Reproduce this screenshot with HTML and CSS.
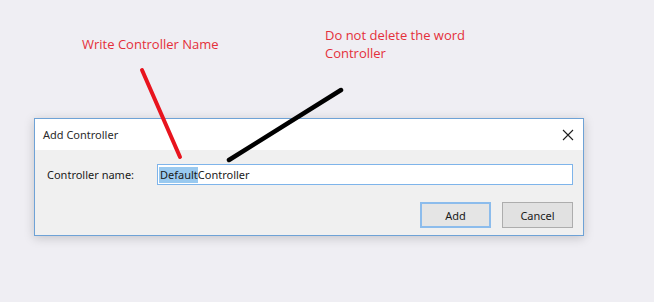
FILE: index.html
```html
<!DOCTYPE html>
<html>
<head>
<meta charset="utf-8">
<link rel="stylesheet" href="styles.css">
</head>
<body>
<div class="screen">
  <div class="dialog">
    <div class="titlebar">
      <span class="title">Add Controller</span>
      <svg class="close" width="12" height="12" viewBox="0 0 12 12"><path d="M1 1L11 11M11 1L1 11" stroke="#1e1e1e" stroke-width="1.1" fill="none"/></svg>
    </div>
    <div class="content">
      <div class="row">
        <span class="label">Controller name:</span>
        <div class="input"><span class="sel">Default</span>Controller</div>
      </div>
      <div class="buttons">
        <div class="btn btn-default">Add</div>
        <div class="btn">Cancel</div>
      </div>
    </div>
  </div>
  <div class="note note1">Write Controller Name</div>
  <div class="note note2">Do not delete the word<br>Controller</div>
  <svg class="lines" width="654" height="302" viewBox="0 0 654 302">
    <line x1="142" y1="70" x2="180" y2="157" stroke="#e8141e" stroke-width="4" stroke-linecap="round"/>
    <line x1="341" y1="90" x2="229" y2="160" stroke="#000" stroke-width="4.5" stroke-linecap="round"/>
  </svg>
</div>
</body>
</html>
```
FILE: styles.css
```css
html, body { margin: 0; padding: 0; }
body { background: #efeef3; font-family: "Noto Sans", "Open Sans", sans-serif; }
.screen { position: relative; width: 654px; height: 302px; padding: 118px 0 0 34px; box-sizing: border-box; overflow: hidden; }
.dialog { width: 550px; height: 118px; box-sizing: border-box; border: 1px solid #6ea2d6; background: #f0f0f0; box-shadow: 0 2px 10px rgba(0,0,0,0.18); display: flex; flex-direction: column; }
.titlebar { height: 31px; background: #fff; display: flex; align-items: center; justify-content: space-between; padding: 0 9px 0 8px; box-sizing: border-box; }
.title { font-size: 11px; color: #2b2b2b; }
.close { display: block; margin-right: 0; }
.content { flex: 1; padding: 14px 10px 0 12px; display: flex; flex-direction: column; }
.row { display: flex; align-items: center; }
.label { width: 110px; font-size: 11px; color: #1a1a1a; }
.input { flex: 1; height: 21px; box-sizing: border-box; border: 1px solid #7eb4ea; background: #fff; font-size: 11px; color: #1a1a1a; display: flex; align-items: center; padding-left: 1px; }
.sel { background: #99c9ef; line-height: 16px; padding: 0 0 0 1px; }
.buttons { display: flex; justify-content: flex-end; gap: 11px; margin-top: 17px; }
.btn { width: 71px; height: 26px; box-sizing: border-box; border: 1px solid #adadad; background: #e1e1e1; font-size: 11px; color: #1a1a1a; display: flex; align-items: center; justify-content: center; }
.btn-default { border: 2px solid #8cbcec; background: #e5e5e5; }
.note { position: absolute; color: #e4303a; font-size: 13px; line-height: 18px; font-family: "Open Sans", "Noto Sans", sans-serif; }
.note1 { left: 82px; top: 35px; }
.note2 { left: 325px; top: 26px; }
.lines { position: absolute; left: 0; top: 0; }
```
